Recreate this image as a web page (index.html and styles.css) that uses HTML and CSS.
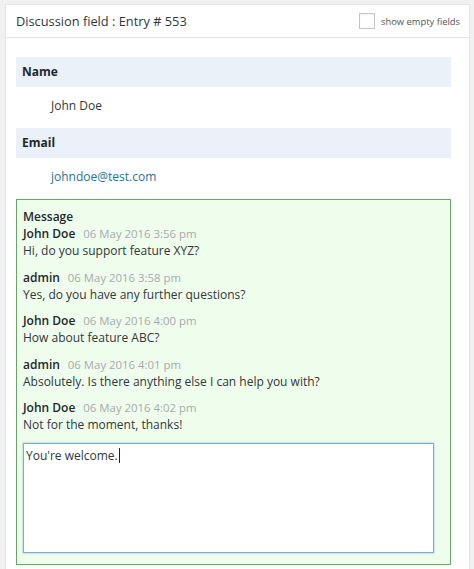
FILE: index.html
```html
<!DOCTYPE html>
<html>
<head>
<meta charset="utf-8">
<link rel="stylesheet" href="styles.css">
</head>
<body>
<div class="panel">
  <div class="panel-head">
    <div class="title">Discussion field : Entry # 553</div>
    <label class="toggle"><input type="checkbox" class="check"><span>show empty fields</span></label>
  </div>
  <div class="panel-body">
    <div class="field-label">Name</div>
    <div class="field-value">John Doe</div>
    <div class="field-label">Email</div>
    <div class="field-value"><a class="link" href="#">johndoe@test.com</a></div>
    <div class="discussion">
      <div class="disc-title">Message</div>
      <div class="msg">
        <div class="meta"><span class="author">John Doe</span><span class="date">06 May 2016 3:56 pm</span></div>
        <div class="text">Hi, do you support feature XYZ?</div>
      </div>
      <div class="msg">
        <div class="meta"><span class="author">admin</span><span class="date">06 May 2016 3:58 pm</span></div>
        <div class="text">Yes, do you have any further questions?</div>
      </div>
      <div class="msg">
        <div class="meta"><span class="author">John Doe</span><span class="date">06 May 2016 4:00 pm</span></div>
        <div class="text">How about feature ABC?</div>
      </div>
      <div class="msg">
        <div class="meta"><span class="author">admin</span><span class="date">06 May 2016 4:01 pm</span></div>
        <div class="text">Absolutely. Is there anything else I can help you with?</div>
      </div>
      <div class="msg">
        <div class="meta"><span class="author">John Doe</span><span class="date">06 May 2016 4:02 pm</span></div>
        <div class="text">Not for the moment, thanks!</div>
      </div>
      <div class="reply">You're welcome.<span class="caret"></span></div>
    </div>
  </div>
</div>
</body>
</html>
```
FILE: styles.css
```css
html, body {
  margin: 0;
  padding: 0;
}
body {
  background: #f1f1f1;
  font-family: "Open Sans", "Noto Sans", sans-serif;
  color: #32373c;
  font-size: 12px;
}
.panel {
  margin: 4px 0 0 5px;
  width: 463px;
  min-height: 570px;
  background: #fff;
  border: 1px solid #e5e5e5;
}
.panel-head {
  height: 32px;
  border-bottom: 1px solid #e5e5e5;
  padding: 0 9px 0 10px;
  display: flex;
  align-items: center;
  justify-content: space-between;
}
.title {
  font-size: 12.8px;
  color: #32373c;
}
.toggle {
  display: flex;
  align-items: center;
  gap: 6px;
  font-size: 9.4px;
  color: #555;
}
.check {
  appearance: none;
  -webkit-appearance: none;
  margin: 0;
  width: 16px;
  height: 16px;
  border: 1px solid #c4c7ca;
  background: #fff;
  box-shadow: inset 0 1px 2px rgba(0,0,0,0.06);
}
.panel-body {
  padding: 19px 18px 0 10px;
}
.field-label {
  height: 30px;
  line-height: 30px;
  background: #eaf1f9;
  padding-left: 6px;
  font-weight: 700;
  color: #23282d;
}
.field-value {
  padding: 10px 0 13px 35px;
  line-height: 18px;
}
.link {
  color: #21759b;
  text-decoration: none;
}
.discussion {
  border: 1px solid #64a864;
  background: #eefdec;
  padding: 8px 16px 11px 6px;
}
.disc-title {
  line-height: 17px;
  font-weight: 600;
  color: #23282d;
}
.msg {
  margin-bottom: 9px;
}
.meta {
  height: 17px;
  line-height: 17px;
  display: flex;
  align-items: baseline;
  gap: 8px;
}
.author {
  font-weight: 600;
  font-size: 12px;
  color: #23282d;
}
.date {
  color: #a7aaad;
  font-size: 11.4px;
}
.text {
  line-height: 17.5px;
  color: #32373c;
}
.reply {
  height: 100px;
  border: 1px solid #7eacd4;
  box-shadow: 0 0 2px rgba(30,140,190,0.5);
  background: #fff;
  padding: 3px 2px 5px 2px;
  line-height: 18px;
  color: #32373c;
}
.caret {
  display: inline-block;
  width: 1px;
  height: 15px;
  background: #222;
  vertical-align: -3px;
  margin-left: 1px;
}
```
